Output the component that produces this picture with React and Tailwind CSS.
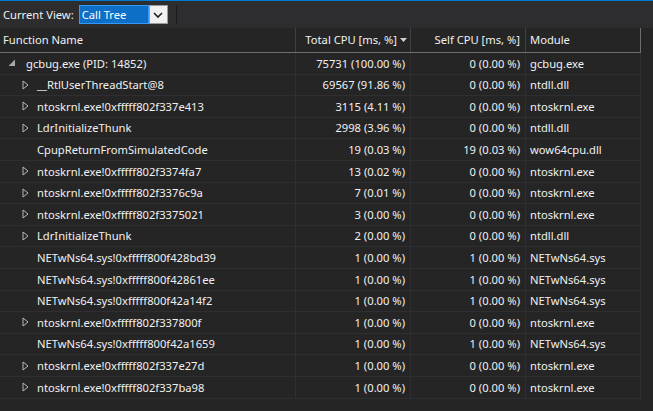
const rows = [
  { name: "gcbug.exe (PID: 14852)", total: "75731 (100.00 %)", self: "0 (0.00 %)", mod: "gcbug.exe", kind: "open" },
  { name: "__RtlUserThreadStart@8", total: "69567 (91.86 %)", self: "0 (0.00 %)", mod: "ntdll.dll", kind: "closed" },
  { name: "ntoskrnl.exe!0xfffff802f337e413", total: "3115 (4.11 %)", self: "0 (0.00 %)", mod: "ntoskrnl.exe", kind: "closed" },
  { name: "LdrInitializeThunk", total: "2998 (3.96 %)", self: "0 (0.00 %)", mod: "ntdll.dll", kind: "closed" },
  { name: "CpupReturnFromSimulatedCode", total: "19 (0.03 %)", self: "19 (0.03 %)", mod: "wow64cpu.dll", kind: "leaf" },
  { name: "ntoskrnl.exe!0xfffff802f3374fa7", total: "13 (0.02 %)", self: "0 (0.00 %)", mod: "ntoskrnl.exe", kind: "closed" },
  { name: "ntoskrnl.exe!0xfffff802f3376c9a", total: "7 (0.01 %)", self: "0 (0.00 %)", mod: "ntoskrnl.exe", kind: "closed" },
  { name: "ntoskrnl.exe!0xfffff802f3375021", total: "3 (0.00 %)", self: "0 (0.00 %)", mod: "ntoskrnl.exe", kind: "closed" },
  { name: "LdrInitializeThunk", total: "2 (0.00 %)", self: "0 (0.00 %)", mod: "ntdll.dll", kind: "closed" },
  { name: "NETwNs64.sys!0xfffff800f428bd39", total: "1 (0.00 %)", self: "1 (0.00 %)", mod: "NETwNs64.sys", kind: "leaf" },
  { name: "NETwNs64.sys!0xfffff800f42861ee", total: "1 (0.00 %)", self: "1 (0.00 %)", mod: "NETwNs64.sys", kind: "leaf" },
  { name: "NETwNs64.sys!0xfffff800f42a14f2", total: "1 (0.00 %)", self: "1 (0.00 %)", mod: "NETwNs64.sys", kind: "leaf" },
  { name: "ntoskrnl.exe!0xfffff802f337800f", total: "1 (0.00 %)", self: "0 (0.00 %)", mod: "ntoskrnl.exe", kind: "closed" },
  { name: "NETwNs64.sys!0xfffff800f42a1659", total: "1 (0.00 %)", self: "1 (0.00 %)", mod: "NETwNs64.sys", kind: "leaf" },
  { name: "ntoskrnl.exe!0xfffff802f337e27d", total: "1 (0.00 %)", self: "0 (0.00 %)", mod: "ntoskrnl.exe", kind: "closed" },
  { name: "ntoskrnl.exe!0xfffff802f337ba98", total: "1 (0.00 %)", self: "0 (0.00 %)", mod: "ntoskrnl.exe", kind: "closed" },
];

function Expander({ kind }) {
  if (kind === "open") {
    return (
      <svg width="8" height="8" viewBox="0 0 8 8" className="shrink-0">
        <path d="M7 0.5 L7 7 L0.5 7 Z" fill="#a8a8a8" />
      </svg>
    );
  }
  if (kind === "closed") {
    return (
      <svg width="7" height="10" viewBox="0 0 7 10" className="shrink-0">
        <path d="M1 1 L6 5 L1 9 Z" fill="none" stroke="#b8b8b8" strokeWidth="1" />
      </svg>
    );
  }
  return <span className="w-[7px] shrink-0" />;
}

export default function App() {
  return (
    <div
      className="w-[653px] h-[411px] overflow-hidden bg-[#252526] text-[#f1f1f1] text-[11.2px] leading-none flex flex-col"
      style={{ fontFamily: '"Segoe UI", "Noto Sans", sans-serif' }}
    >
      {/* toolbar */}
      <div className="h-[28px] shrink-0 bg-[#2d2d30] border-t border-[#007acc] flex items-center pl-[3px]">
        <span className="text-[#f1f1f1]">Current View:</span>
        <div className="ml-[5px] flex items-center h-[19px]">
          <div className="w-[70px] h-full bg-[#0e6fc7] border border-[#3399ff] flex items-center pl-[2px] text-white">
            Call Tree
          </div>
          <div className="w-[19px] h-full bg-[#f0f0f0] border border-[#9a9a9a] flex items-center justify-center">
            <svg width="10" height="6" viewBox="0 0 10 6">
              <path d="M1 1 L5 5 L9 1" fill="none" stroke="#1e1e1e" strokeWidth="1.6" />
            </svg>
          </div>
        </div>
        <div className="ml-[8px] w-px h-[19px] bg-[#1b1b1c]" />
      </div>

      {/* header */}
      <div className="h-[25px] shrink-0 flex">
        <div className="w-[641px] flex border-b border-r border-[#6e6e6e]">
          <div className="w-[296px] border-r border-[#3f3f46] flex items-center pl-[3px]">Function Name</div>
          <div className="w-[115px] border-r border-[#3f3f46] flex items-center justify-end pr-[3px] gap-[3px]">
            <span>Total CPU [ms, %]</span>
            <svg width="7" height="4" viewBox="0 0 7 4">
              <path d="M0 0 L7 0 L3.5 4 Z" fill="#d0d0d0" />
            </svg>
          </div>
          <div className="w-[115px] border-r border-[#3f3f46] flex items-center justify-end pr-[5px]">Self CPU [ms, %]</div>
          <div className="flex-1 flex items-center pl-[4px]">Module</div>
        </div>
      </div>

      {/* rows */}
      <div className="flex flex-col">
        {rows.map((r, i) => (
          <div key={i} className="h-[21.6px] shrink-0 flex">
            <div className="w-[641px] flex border-b border-r border-[#2f2f31]">
              <div
                className={`w-[296px] border-r border-[#2f2f31] flex items-center ${
                  r.kind === "open" ? "pl-[8px] gap-[10px]" : "pl-[22px] gap-[8px]"
                }`}
              >
                <Expander kind={r.kind} />
                <span className="whitespace-nowrap">{r.name}</span>
              </div>
              <div className="w-[115px] border-r border-[#2f2f31] flex items-center justify-end pr-[5px] whitespace-nowrap">
                {r.total}
              </div>
              <div className="w-[115px] border-r border-[#2f2f31] flex items-center justify-end pr-[5px] whitespace-nowrap">
                {r.self}
              </div>
              <div className="flex-1 flex items-center pl-[4px] whitespace-nowrap">{r.mod}</div>
            </div>
          </div>
        ))}
      </div>
    </div>
  );
}
